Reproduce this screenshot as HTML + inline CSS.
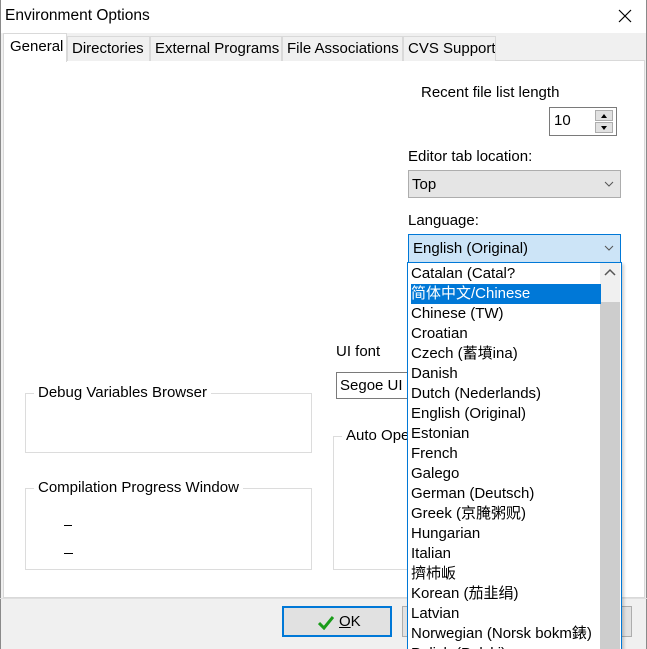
<!DOCTYPE html><html><head><style>
*{margin:0;padding:0;box-sizing:border-box}
html{width:647px;height:649px;overflow:hidden}
body{width:647px;height:649px;position:relative;overflow:hidden;background:#f0f0f0;font-family:"Liberation Sans","Noto Sans CJK SC",sans-serif;font-size:15px;color:#000}
.a{position:absolute}
.win{left:0;top:0;width:647px;height:649px;border-left:1px solid #8a8a8a;border-right:1px solid #8a8a8a}
.tab{position:absolute;top:36px;height:25px;background:#f0f0f0;border:1px solid #d9d9d9;border-bottom:none;padding:3px 0 0 4px;font-size:15px;white-space:nowrap;overflow:hidden}
.gb{position:absolute;border:1px solid #dcdcdc}
.gb span{position:absolute;top:-10px;left:8px;background:#fff;padding:0 4px;white-space:nowrap}
.it{position:absolute;left:3px;height:20px;line-height:20px;width:190px;white-space:nowrap}
</style></head><body>
<div class="a win"></div>
<div class="a" style="left:1px;top:0;width:645px;height:33px;background:#fff"></div>
<div class="a" style="left:5px;top:7px;font-size:15.5px">Environment Options</div>
<svg class="a" style="left:618px;top:9px" width="14" height="14"><path d="M1 1L13 13M13 1L1 13" stroke="#000" stroke-width="1.2"/></svg>
<div class="a" style="left:3px;top:60px;width:642px;height:538px;background:#fff;border:1px solid #d9d9d9"></div>
<div class="tab" style="left:67px;width:83px">Directories</div>
<div class="tab" style="left:150px;width:132px">External Programs</div>
<div class="tab" style="left:282px;width:121px">File Associations</div>
<div class="tab" style="left:403px;width:93px">CVS Support</div>
<div class="a" style="left:3px;top:33px;width:64px;height:29px;background:#fff;border:1px solid #d9d9d9;border-bottom:none;padding:4px 0 0 6px">General</div>
<div class="a" style="left:421px;top:84px">Recent file list length</div>
<div class="a" style="left:549px;top:107px;width:68px;height:29px;border:1px solid #7a7a7a;background:#fff;padding:4px 0 0 4px">10</div>
<div class="a" style="left:595px;top:110px;width:18px;height:11px;background:#e1e1e1;border:1px solid #adadad"></div>
<div class="a" style="left:595px;top:122px;width:18px;height:11px;background:#e1e1e1;border:1px solid #adadad"></div>
<svg class="a" style="left:595px;top:110px" width="18" height="24"><path d="M6 8L9 4L12 8Z M6 16L12 16L9 20Z" fill="#000"/></svg>
<div class="a" style="left:408px;top:148px">Editor tab location:</div>
<div class="a" style="left:408px;top:170px;width:213px;height:28px;background:#e5e5e5;border:1px solid #adadad;padding:5px 0 0 3px">Top</div>
<svg class="a" style="left:604px;top:180px" width="10" height="8"><path d="M1 2L5 6L9 2" fill="none" stroke="#555"/></svg>
<div class="a" style="left:408px;top:212px">Language:</div>
<div class="a" style="left:408px;top:234px;width:213px;height:29px;background:#cce4f7;border:1px solid #0078d7;padding:5px 0 0 4px">English (Original)</div>
<svg class="a" style="left:604px;top:244px" width="10" height="8"><path d="M1 2L5 6L9 2" fill="none" stroke="#555"/></svg>
<div class="a" style="left:336px;top:343px">UI font</div>
<div class="a" style="left:336px;top:372px;width:80px;height:27px;border:1px solid #7a7a7a;background:#fff;padding:4px 0 0 3px">Segoe UI</div>
<div class="gb" style="left:25px;top:393px;width:287px;height:60px"><span>Debug Variables Browser</span></div>
<div class="gb" style="left:25px;top:488px;width:287px;height:82px"><span>Compilation Progress Window</span></div>
<div class="a" style="left:64px;top:525px;width:8px;height:1px;background:#000"></div>
<div class="a" style="left:64px;top:553px;width:9px;height:1px;background:#000"></div>
<div class="gb" style="left:333px;top:436px;width:100px;height:134px"><span>Auto Open</span></div>
<div class="a" style="left:0;top:598px;width:647px;height:1px;background:#dfdfdf"></div>
<div class="a" style="left:282px;top:606px;width:110px;height:31px;background:#e1e1e1;border:2px solid #0078d7"><svg style="position:absolute;left:34px;top:7px" width="16" height="15"><path d="M1 8L6 13L15 2" fill="none" stroke="#1a9c1a" stroke-width="3"/></svg><span style="position:absolute;left:55px;top:5px"><u>O</u>K</span></div>
<div class="a" style="left:402px;top:606px;width:230px;height:31px;background:#e1e1e1;border:1px solid #adadad"></div>
<div class="a" style="left:407px;top:262px;width:215px;height:387px;overflow:hidden;background:#fff;border:1px solid #0078d7;border-bottom:none;box-shadow:2px 2px 3px rgba(0,0,0,.2)">
<div class="a" style="left:192px;top:0;width:20px;height:390px;background:#f0f0f0"></div>
<div class="a" style="left:192px;top:39px;width:20px;height:351px;background:#cdcdcd"></div>
<svg class="a" style="left:196px;top:5px" width="12" height="8"><path d="M1 7L6 2L11 7" fill="none" stroke="#555" stroke-width="1.5"/></svg>
<div class="it" style="top:1px">Catalan (Catal?</div>
<div class="it" style="top:21px;background:#0078d7;color:#fff">简体中文/Chinese</div>
<div class="it" style="top:41px">Chinese (TW)</div>
<div class="it" style="top:61px">Croatian</div>
<div class="it" style="top:81px">Czech (蓄墳ina)</div>
<div class="it" style="top:101px">Danish</div>
<div class="it" style="top:121px">Dutch (Nederlands)</div>
<div class="it" style="top:141px">English (Original)</div>
<div class="it" style="top:161px">Estonian</div>
<div class="it" style="top:181px">French</div>
<div class="it" style="top:201px">Galego</div>
<div class="it" style="top:221px">German (Deutsch)</div>
<div class="it" style="top:241px">Greek (京腌粥贶)</div>
<div class="it" style="top:261px">Hungarian</div>
<div class="it" style="top:281px">Italian</div>
<div class="it" style="top:301px">擠杮岅</div>
<div class="it" style="top:321px">Korean (茄韭绢)</div>
<div class="it" style="top:341px">Latvian</div>
<div class="it" style="top:361px">Norwegian (Norsk bokm錶)</div>
<div class="it" style="top:381px">Polish (Polski)</div>
</div>
</body></html>
